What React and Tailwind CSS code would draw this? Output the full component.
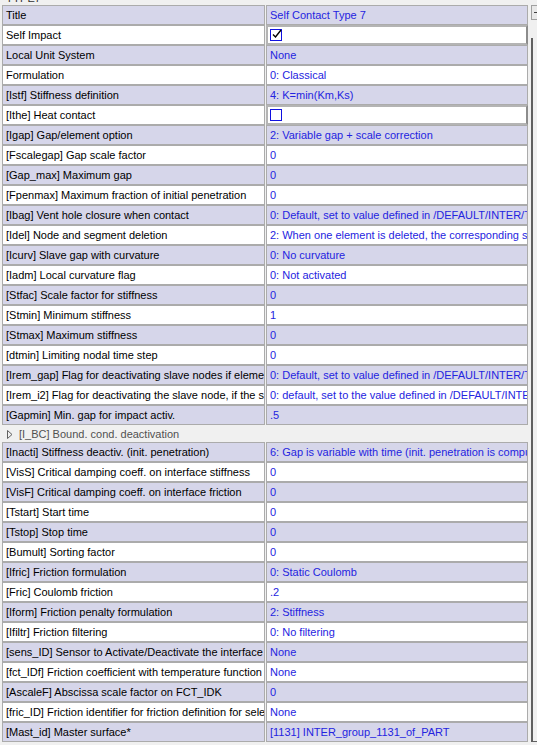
import React from 'react';

const rowsA = [
  { label: 'Title', value: 'Self Contact Type 7' },
  { label: 'Self Impact', check: true },
  { label: 'Local Unit System', value: 'None' },
  { label: 'Formulation', value: '0: Classical' },
  { label: '[Istf] Stiffness definition', value: '4: K=min(Km,Ks)' },
  { label: '[Ithe] Heat contact', check: false },
  { label: '[Igap] Gap/element option', value: '2: Variable gap + scale correction' },
  { label: '[Fscalegap] Gap scale factor', value: '0' },
  { label: '[Gap_max] Maximum gap', value: '0' },
  { label: '[Fpenmax] Maximum fraction of initial penetration', value: '0' },
  { label: '[Ibag] Vent hole closure when contact', value: '0: Default, set to value defined in /DEFAULT/INTER/TYPE7' },
  { label: '[Idel] Node and segment deletion', value: '2: When one element is deleted, the corresponding segment is removed' },
  { label: '[Icurv] Slave gap with curvature', value: '0: No curvature' },
  { label: '[Iadm] Local curvature flag', value: '0: Not activated' },
  { label: '[Stfac] Scale factor for stiffness', value: '0' },
  { label: '[Stmin] Minimum stiffness', value: '1' },
  { label: '[Stmax] Maximum stiffness', value: '0' },
  { label: '[dtmin] Limiting nodal time step', value: '0' },
  { label: '[Irem_gap] Flag for deactivating slave nodes if element size < gap', value: '0: Default, set to value defined in /DEFAULT/INTER/TYPE7' },
  { label: '[Irem_i2] Flag for deactivating the slave node, if the same contact pair', value: '0: default, set to the value defined in /DEFAULT/INTER/TYPE7' },
  { label: '[Gapmin] Min. gap for impact activ.', value: '.5' },
];

const rowsB = [
  { label: '[Inacti] Stiffness deactiv. (init. penetration)', value: '6: Gap is variable with time (init. penetration is computed)' },
  { label: '[VisS] Critical damping coeff. on interface stiffness', value: '0' },
  { label: '[VisF] Critical damping coeff. on interface friction', value: '0' },
  { label: '[Tstart] Start time', value: '0' },
  { label: '[Tstop] Stop time', value: '0' },
  { label: '[Bumult] Sorting factor', value: '0' },
  { label: '[Ifric] Friction formulation', value: '0: Static Coulomb' },
  { label: '[Fric] Coulomb friction', value: '.2' },
  { label: '[Iform] Friction penalty formulation', value: '2: Stiffness' },
  { label: '[Ifiltr] Friction filtering', value: '0: No filtering' },
  { label: '[sens_ID] Sensor to Activate/Deactivate the interface', value: 'None' },
  { label: '[fct_IDf] Friction coefficient with temperature function', value: 'None' },
  { label: '[AscaleF] Abscissa scale factor on FCT_IDK', value: '0' },
  { label: '[fric_ID] Friction identifier for friction definition for selected parts', value: 'None' },
  { label: '[Mast_id] Master surface*', value: '[1131] INTER_group_1131_of_PART' },
];

function CheckBox({ checked }) {
  return (
    <div className="relative w-[12px] h-[12px] border border-[#1010e0] bg-white">
      {checked && (
        <svg className="absolute left-[0px] top-[-2px]" width="12" height="12" viewBox="0 0 12 12">
          <path d="M2 6.5 L4.5 9 L10 2" fill="none" stroke="#000" strokeWidth="1.4" />
        </svg>
      )}
    </div>
  );
}

function Row({ label, value, check, odd }) {
  const bg = odd ? 'bg-[#d6d6ea]' : 'bg-white';
  return (
    <div className="flex gap-[1px] h-[20px]">
      <div className={`w-[263px] h-[20px] border border-[#ababab] ${bg} pl-[3px] pt-[1px] flex items-center overflow-hidden whitespace-nowrap text-black`}>
        {label}
      </div>
      {check !== undefined ? (
        <div className="w-[262px] h-[20px] border-2 border-[#b4b4b4] border-r-[#8c8c8c] bg-white pl-[2px] flex items-center">
          <CheckBox checked={check} />
        </div>
      ) : (
        <div className={`w-[262px] h-[20px] border border-[#ababab] ${bg} pl-[3px] pt-[1px] flex items-center overflow-hidden whitespace-nowrap text-[#2424e0]`}>
          {value}
        </div>
      )}
    </div>
  );
}

export default function App() {
  return (
    <div
      className="w-[537px] h-[745px] bg-[#f0f0f0] overflow-hidden flex text-[11px] leading-none"
      style={{ fontFamily: '"Liberation Sans", Arial, sans-serif' }}
    >
      <div className="w-[530px] pl-[2px] flex flex-col">
        <div className="h-[5px] overflow-hidden pl-[4px]">
          <div className="-mt-[7px] text-[#303030] text-[11px]">TYPE7</div>
        </div>
        {rowsA.map((r, i) => (
          <Row key={r.label} {...r} odd={i % 2 === 0} />
        ))}
        <div className="h-[17px] flex items-center gap-[6px] pl-[5px] pt-[1px] text-[#505050]">
          <svg width="6" height="9" viewBox="0 0 6 9">
            <path d="M0.5 0.5 L5 4.5 L0.5 8.5 Z" fill="none" stroke="#606060" strokeWidth="1" />
          </svg>
          <span>[I_BC] Bound. cond. deactivation</span>
        </div>
        {rowsB.map((r, i) => (
          <Row key={r.label} {...r} odd={i % 2 === 0} />
        ))}
      </div>
      <div className="flex-1 flex flex-col pt-[5px] pl-[2px]">
        <div className="h-[15px] border border-[#a0a0a0] border-r-0 bg-[#e8e8e8] flex items-center pl-[2px]">
          <div className="w-[3px] h-[1px] bg-[#404040]" />
        </div>
        <div className="flex-1 mt-[18px] mb-[3px] border-l-2 border-b border-[#606060]" />
      </div>
    </div>
  );
}
